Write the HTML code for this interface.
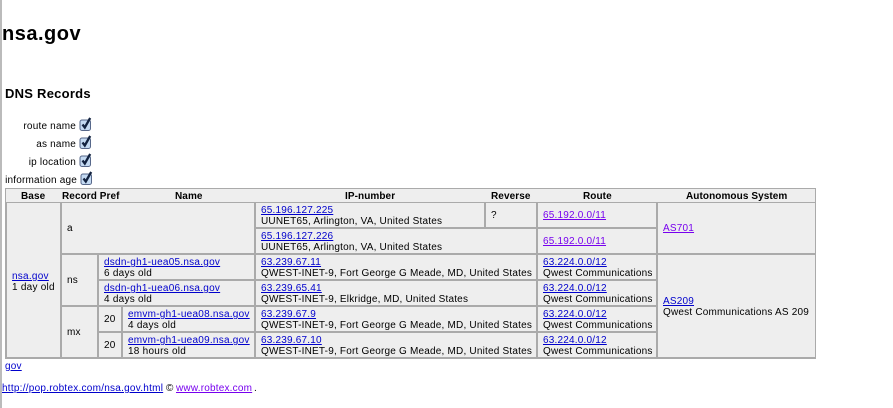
<!DOCTYPE html>
<html><head><meta charset="utf-8"><style>
html,body{margin:0;padding:0;width:893px;height:408px;overflow:hidden;background:#fff}
body{position:relative;font-family:"Liberation Sans",sans-serif;font-size:10px;line-height:11px;color:#000}
div{position:absolute;white-space:nowrap}
.c{background:#eee}
.t{letter-spacing:.2px}
.n{letter-spacing:.25px}
a{color:#00c;text-decoration:underline}
a.v{color:#70e}
b.h{position:absolute;top:190px;font-size:10px;letter-spacing:.08px;line-height:13px;white-space:nowrap}
svg{position:absolute}
</style></head><body>
<div style="left:0;top:0;width:2px;height:408px;background:#bbb"></div>
<div style="left:2px;top:22px;font-size:20px;line-height:24px;font-weight:bold;letter-spacing:.5px">nsa.gov</div>
<div style="left:5px;top:86px;font-size:13px;line-height:16px;font-weight:bold;letter-spacing:.25px">DNS Records</div>

<div class="t" style="right:817px;top:121px">route name</div>
<div class="t" style="right:817px;top:139px">as name</div>
<div class="t" style="right:817px;top:157px">ip location</div>
<div class="t" style="right:816px;top:175px">information age</div>

<svg width="14" height="15" style="left:79px;top:117px"><rect x="1" y="3" width="10.5" height="10.5" rx="2" fill="#c4daf2" stroke="#56678a"/><path d="M3.5 7.5L5.8 10.5L11.2 1" fill="none" stroke="#12223f" stroke-width="2.3"/></svg>
<svg width="14" height="15" style="left:79px;top:135px"><rect x="1" y="3" width="10.5" height="10.5" rx="2" fill="#c4daf2" stroke="#56678a"/><path d="M3.5 7.5L5.8 10.5L11.2 1" fill="none" stroke="#12223f" stroke-width="2.3"/></svg>
<svg width="14" height="15" style="left:79px;top:153px"><rect x="1" y="3" width="10.5" height="10.5" rx="2" fill="#c4daf2" stroke="#56678a"/><path d="M3.5 7.5L5.8 10.5L11.2 1" fill="none" stroke="#12223f" stroke-width="2.3"/></svg>
<svg width="14" height="15" style="left:80px;top:171px"><rect x="1" y="3" width="10.5" height="10.5" rx="2" fill="#c4daf2" stroke="#56678a"/><path d="M3.5 7.5L5.8 10.5L11.2 1" fill="none" stroke="#12223f" stroke-width="2.3"/></svg>

<div style="left:5px;top:188px;width:811px;height:171px;background:#aaa"></div>
<div class="c" style="left:6px;top:189px;width:809px;height:13px"></div>
<b class="h" style="left:21px">Base</b>
<b class="h" style="left:62px">Record Pref</b>
<b class="h" style="left:175px">Name</b>
<b class="h" style="left:345px">IP-number</b>
<b class="h" style="left:491px">Reverse</b>
<b class="h" style="left:583px">Route</b>
<b class="h" style="left:686px">Autonomous System</b>

<div class="c" style="left:7px;top:203px;width:53px;height:154px"></div>
<div class="c" style="left:62px;top:203px;width:192px;height:50px"></div>
<div class="c" style="left:62px;top:255px;width:35px;height:50px"></div>
<div class="c" style="left:62px;top:307px;width:35px;height:50px"></div>
<div class="c" style="left:99px;top:255px;width:155px;height:24px"></div>
<div class="c" style="left:99px;top:281px;width:155px;height:24px"></div>
<div class="c" style="left:99px;top:307px;width:22px;height:24px"></div>
<div class="c" style="left:99px;top:333px;width:22px;height:24px"></div>
<div class="c" style="left:123px;top:307px;width:131px;height:24px"></div>
<div class="c" style="left:123px;top:333px;width:131px;height:24px"></div>
<div class="c" style="left:256px;top:203px;width:228px;height:24px"></div>
<div class="c" style="left:486px;top:203px;width:50px;height:24px"></div>
<div class="c" style="left:256px;top:229px;width:280px;height:24px"></div>
<div class="c" style="left:256px;top:255px;width:280px;height:24px"></div>
<div class="c" style="left:256px;top:281px;width:280px;height:24px"></div>
<div class="c" style="left:256px;top:307px;width:280px;height:24px"></div>
<div class="c" style="left:256px;top:333px;width:280px;height:24px"></div>
<div class="c" style="left:538px;top:203px;width:118px;height:24px"></div>
<div class="c" style="left:538px;top:229px;width:118px;height:24px"></div>
<div class="c" style="left:538px;top:255px;width:118px;height:24px"></div>
<div class="c" style="left:538px;top:281px;width:118px;height:24px"></div>
<div class="c" style="left:538px;top:307px;width:118px;height:24px"></div>
<div class="c" style="left:538px;top:333px;width:118px;height:24px"></div>
<div class="c" style="left:658px;top:203px;width:157px;height:50px"></div>
<div class="c" style="left:658px;top:255px;width:157px;height:102px"></div>

<div class="n" style="left:12px;top:271px"><a href="#">nsa.gov</a><br>1 day old</div>
<div class="t" style="left:67px;top:223px">a</div>
<div class="t" style="left:67px;top:275px">ns</div>
<div class="t" style="left:67px;top:327px">mx</div>
<div class="n" style="left:104px;top:257px"><a href="#">dsdn-gh1-uea05.nsa.gov</a><br>6 days old</div>
<div class="n" style="left:104px;top:283px"><a href="#">dsdn-gh1-uea06.nsa.gov</a><br>4 days old</div>
<div class="t" style="left:104px;top:314px">20</div>
<div class="t" style="left:104px;top:340px">20</div>
<div class="n" style="left:128px;top:309px"><a href="#">emvm-gh1-uea08.nsa.gov</a><br>4 days old</div>
<div class="n" style="left:128px;top:335px"><a href="#">emvm-gh1-uea09.nsa.gov</a><br>18 hours old</div>

<div class="t" style="left:261px;top:205px"><a href="#">65.196.127.225</a><br>UUNET65, Arlington, VA, United States</div>
<div class="t" style="left:261px;top:231px"><a href="#">65.196.127.226</a><br>UUNET65, Arlington, VA, United States</div>
<div class="t" style="left:261px;top:257px"><a href="#">63.239.67.11</a><br>QWEST-INET-9, Fort George G Meade, MD, United States</div>
<div class="t" style="left:261px;top:283px"><a href="#">63.239.65.41</a><br>QWEST-INET-9, Elkridge, MD, United States</div>
<div class="t" style="left:261px;top:309px"><a href="#">63.239.67.9</a><br>QWEST-INET-9, Fort George G Meade, MD, United States</div>
<div class="t" style="left:261px;top:335px"><a href="#">63.239.67.10</a><br>QWEST-INET-9, Fort George G Meade, MD, United States</div>
<div class="t" style="left:491px;top:210px">?</div>

<div class="t" style="left:543px;top:210px"><a class="v" href="#">65.192.0.0/11</a></div>
<div class="t" style="left:543px;top:236px"><a class="v" href="#">65.192.0.0/11</a></div>
<div class="t" style="left:543px;top:257px"><a href="#">63.224.0.0/12</a><br>Qwest Communications</div>
<div class="t" style="left:543px;top:283px"><a href="#">63.224.0.0/12</a><br>Qwest Communications</div>
<div class="t" style="left:543px;top:309px"><a href="#">63.224.0.0/12</a><br>Qwest Communications</div>
<div class="t" style="left:543px;top:335px"><a href="#">63.224.0.0/12</a><br>Qwest Communications</div>
<div class="t" style="left:663px;top:223px"><a class="v" href="#">AS701</a></div>
<div class="t" style="left:663px;top:296px"><a href="#">AS209</a><br>Qwest Communications AS 209</div>

<div class="t" style="left:5px;top:361px"><a href="#">gov</a></div>
<div class="n" style="left:2px;top:383px"><a href="#">http://pop.robtex.com/nsa.gov.html</a></div>
<div style="left:166px;top:383px">©</div>
<div class="t" style="left:176px;top:383px"><a class="v" href="#">www.robtex.com</a></div>
<div style="left:254px;top:383px">.</div>
</body></html>
